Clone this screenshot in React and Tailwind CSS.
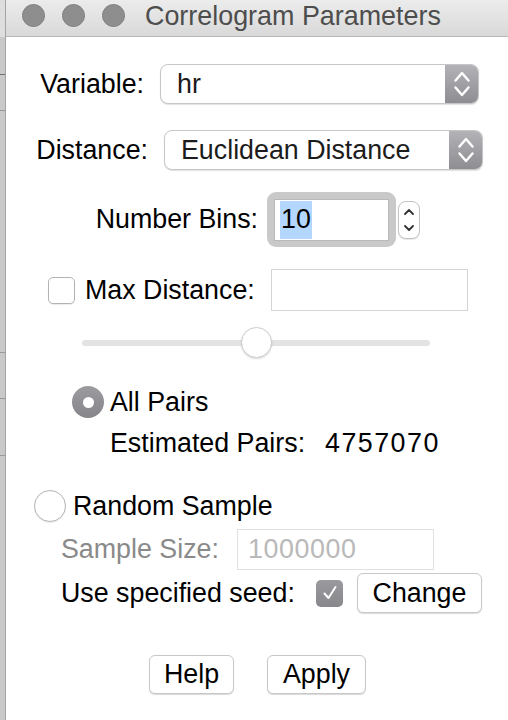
import React from 'react';

const PopupArrows = () => (
  <svg width="16" height="28" viewBox="0 0 16 28" fill="none" stroke="white" strokeWidth="2.4" strokeLinecap="round" strokeLinejoin="round">
    <path d="M1.5 10.5 L8 3 L14.5 10.5" />
    <path d="M1.5 17.5 L8 25 L14.5 17.5" />
  </svg>
);

const Popup = ({ value, className }) => (
  <div className={`flex h-[40px] w-[319px] items-stretch rounded-[8px] border border-[#c6c6c6] bg-white shadow-[0_1px_1px_rgba(0,0,0,0.12)] ${className}`}>
    <div className="flex flex-1 items-center pl-[16px] leading-none text-[#1c1c1c]">{value}</div>
    <div className="flex w-[33px] items-center justify-center rounded-r-[7px] bg-gradient-to-b from-[#b2b2b7] to-[#8d8d92]">
      <PopupArrows />
    </div>
  </div>
);

const Button = ({ children, className }) => (
  <div className={`flex items-center justify-center rounded-[6px] border border-[#c8c8c8] bg-white leading-none text-black shadow-[0_1px_1px_rgba(0,0,0,0.15)] ${className}`}>
    {children}
  </div>
);

// sliver of the window behind the dialog
const BackStrip = () => (
  <div className="relative w-[6px] shrink-0 overflow-hidden border-r border-[#a4a4a4] bg-[#c9c9c9]">
    <div className="absolute left-0 top-0 h-[37px] w-full bg-[#dedede]" />
    <div className="absolute left-0 top-[74px] h-px w-full bg-[#6f6f6f]" />
    <div className="absolute left-0 top-[110px] h-px w-full bg-[#9a9a9a]" />
    <div className="absolute left-0 top-[352px] h-px w-full bg-[#9a9a9a]" />
    <div className="absolute left-0 top-[398px] h-px w-full bg-[#9a9a9a]" />
    <div className="absolute left-0 top-[455px] h-px w-full bg-[#9a9a9a]" />
  </div>
);

export default function App() {
  return (
    <div className="flex h-[720px] w-[508px] overflow-hidden bg-white font-['Liberation_Sans',Arial,sans-serif]">
      <BackStrip />
      <div className="flex flex-1 flex-col">
        {/* title bar */}
        <div className="flex h-[37px] items-start border-b border-[#b7b7b7] bg-gradient-to-b from-[#ececec] to-[#d9d9d9] pl-[16px] pt-[4px]">
          <div className="flex gap-[17px]">
            <span className="h-[23px] w-[23px] rounded-full border border-[#7f7f7f] bg-[#8e8e8e]" />
            <span className="h-[23px] w-[23px] rounded-full border border-[#7f7f7f] bg-[#8e8e8e]" />
            <span className="h-[23px] w-[23px] rounded-full border border-[#7f7f7f] bg-[#8e8e8e]" />
          </div>
          <div className="ml-[20px] text-[26.9px] leading-[24px] text-[#4d4d4d]">Correlogram Parameters</div>
        </div>

        <div className="flex flex-col text-[26.8px] leading-none text-black">
          {/* Variable */}
          <div className="mt-[27px] flex h-[40px] items-center">
            <div className="w-[138px] whitespace-nowrap text-right">Variable:</div>
            <Popup value="hr" className="ml-[16px]" />
          </div>

          {/* Distance */}
          <div className="mt-[26px] flex h-[40px] items-center">
            <div className="w-[142px] whitespace-nowrap text-right">Distance:</div>
            <Popup value="Euclidean Distance" className="ml-[16px]" />
          </div>

          {/* Number Bins */}
          <div className="mt-[22px] flex h-[55px] items-center">
            <div className="w-[252px] whitespace-nowrap text-right">Number Bins:</div>
            <div className="ml-[9px] flex h-[55px] w-[129px] items-center justify-center rounded-[9px] bg-[#c9c9c9]">
              <div className="flex h-[42px] w-[115px] items-center border border-[#b9b9b9] bg-white pl-[5px]">
                <span className="flex h-[38px] items-center bg-[#b3d7ff] px-[1px]">10</span>
              </div>
            </div>
            <div className="ml-[2px] flex h-[38px] w-[22px] flex-col items-center justify-center gap-[10px] rounded-[8px] border border-[#c3c3c3] bg-white shadow-[0_1px_1px_rgba(0,0,0,0.1)]">
              <svg width="10" height="6" viewBox="0 0 10 6" fill="none" stroke="#333" strokeWidth="1.8" strokeLinecap="round" strokeLinejoin="round">
                <path d="M1 5 L5 1 L9 5" />
              </svg>
              <svg width="10" height="6" viewBox="0 0 10 6" fill="none" stroke="#333" strokeWidth="1.8" strokeLinecap="round" strokeLinejoin="round">
                <path d="M1 1 L5 5 L9 1" />
              </svg>
            </div>
          </div>

          {/* Max Distance */}
          <div className="mt-[22px] flex h-[42px] items-center">
            <div className="ml-[42px] h-[27px] w-[27px] rounded-[5px] border border-[#b3b3b3] bg-white shadow-[0_1px_1px_rgba(0,0,0,0.08)]" />
            <div className="ml-[10px] w-[169px] whitespace-nowrap">Max Distance:</div>
            <div className="ml-[17px] h-[42px] w-[197px] border border-[#d4d4d4] bg-white" />
          </div>

          {/* slider */}
          <div className="mt-[16px] flex h-[31px] items-center pl-[76px]">
            <div className="relative flex h-[6px] w-[348px] items-center rounded-full bg-[#e3e3e3]">
              <div className="absolute left-[159px] h-[31px] w-[31px] rounded-full border border-[#cdcdcd] bg-white shadow-[0_1px_2px_rgba(0,0,0,0.15)]" />
            </div>
          </div>

          {/* All Pairs */}
          <div className="mt-[28px] flex h-[32px] items-center">
            <div className="ml-[66px] flex h-[32px] w-[32px] items-center justify-center rounded-full bg-gradient-to-b from-[#9c9ca0] to-[#86868a]">
              <span className="h-[11px] w-[11px] rounded-full bg-white" />
            </div>
            <div className="ml-[6px]">All Pairs</div>
          </div>

          {/* Estimated Pairs */}
          <div className="mt-[10px] flex h-[30px] items-center pl-[104px]">
            <div className="w-[215px] whitespace-nowrap">Estimated Pairs:</div>
            <div className="tracking-[1.5px]">4757070</div>
          </div>

          {/* Random Sample */}
          <div className="mt-[32px] flex h-[32px] items-center">
            <div className="ml-[28px] h-[32px] w-[32px] rounded-full border border-[#b5b5b5] bg-white shadow-[0_1px_1px_rgba(0,0,0,0.08)]" />
            <div className="ml-[7px]">Random Sample</div>
          </div>

          {/* Sample Size */}
          <div className="mt-[7px] flex h-[41px] items-center pl-[55px]">
            <div className="w-[176px] whitespace-nowrap text-[#8a8a8a]">Sample Size:</div>
            <div className="flex h-[41px] w-[197px] items-center border border-[#e0e0e0] bg-white pl-[10px] tracking-[0.6px] text-[#b9b9b9]">1000000</div>
          </div>

          {/* seed */}
          <div className="mt-[3px] flex h-[40px] items-center pl-[55px]">
            <div className="w-[255px] whitespace-nowrap">Use specified seed:</div>
            <div className="flex h-[27px] w-[27px] items-center justify-center rounded-[5px] bg-gradient-to-b from-[#9a9a9e] to-[#88888c]">
              <svg width="18" height="18" viewBox="0 0 18 18" fill="none" stroke="white" strokeWidth="2" strokeLinecap="round" strokeLinejoin="round">
                <path d="M3.5 9.5 L7.5 14 L14.5 3" />
              </svg>
            </div>
            <Button className="ml-[14px] h-[40px] w-[125px]">Change</Button>
          </div>

          {/* bottom buttons */}
          <div className="mt-[42px] flex h-[39px] items-center pl-[143px]">
            <Button className="h-[39px] w-[85px]">Help</Button>
            <Button className="ml-[33px] h-[39px] w-[99px]">Apply</Button>
          </div>
        </div>
      </div>
    </div>
  );
}
